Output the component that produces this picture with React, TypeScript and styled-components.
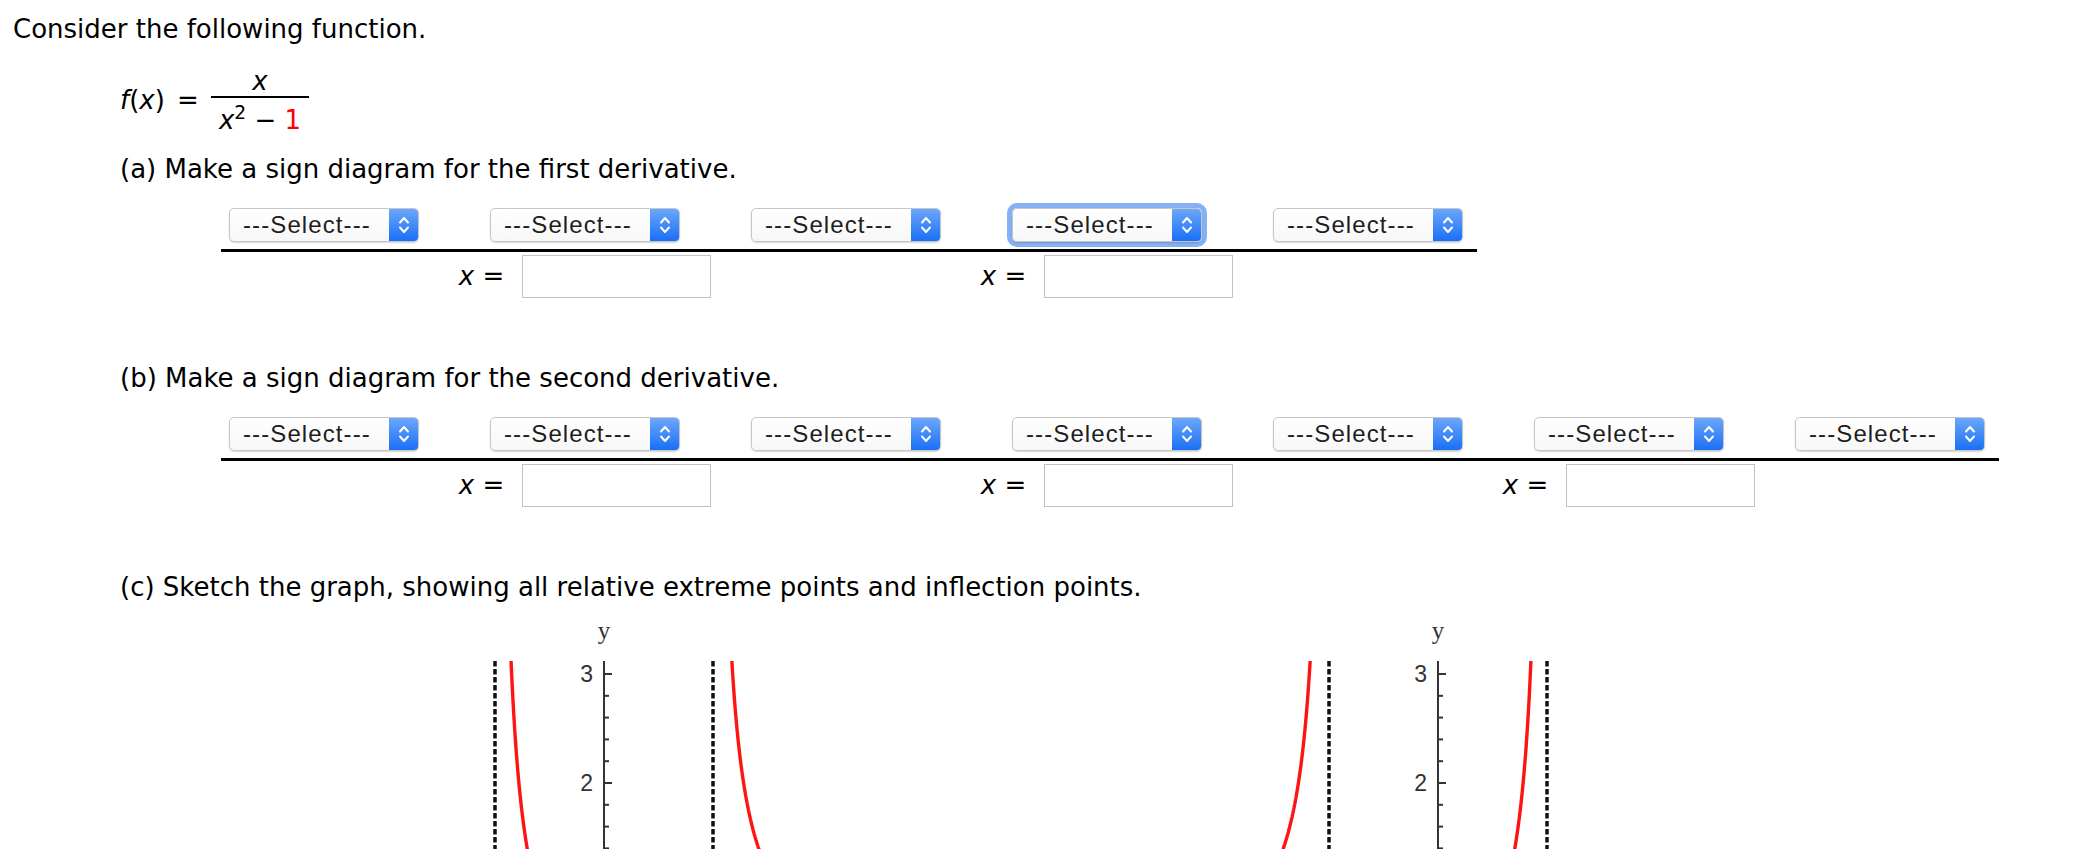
import React from 'react';
import styled, { createGlobalStyle } from 'styled-components';

const GlobalStyle = createGlobalStyle`
  html, body {
    margin: 0;
    padding: 0;
    background: #fff;
    overflow: hidden;
  }
  body {
    font-family: 'DejaVu Sans', Verdana, sans-serif;
    color: #000;
  }
`;

const Page = styled.div`
  padding: 14px 0 0 13px;
  font-size: 26px;
  line-height: 31px;
`;

const Intro = styled.p`
  margin: 0;
`;

const Formula = styled.div`
  display: flex;
  align-items: center;
  margin: 21px 0 0 107px;
`;

const Lhs = styled.span`
  white-space: pre;
  word-spacing: 4px;
`;

const Var = styled.i`
  font-style: italic;
`;

const Fraction = styled.span`
  display: inline-flex;
  flex-direction: column;
  align-items: center;
  margin-left: 12px;
`;

const Numerator = styled.span`
  line-height: 30px;
`;

const Bar = styled.span`
  align-self: stretch;
  height: 2px;
  background: #000;
`;

const Denominator = styled.span`
  padding: 7px 8px 0;
  line-height: 30px;
  white-space: pre;
`;

const Sup = styled.sup`
  font-size: 0.72em;
  vertical-align: 0.55em;
  line-height: 0;
`;

const Red = styled.span`
  color: #f00;
`;

const PartTitle = styled.p<{ $top: number }>`
  margin: ${({ $top }) => $top}px 0 0 107px;
`;

const Diagram = styled.div`
  margin: 23px 0 0 208px;
  width: max-content;
`;

const SelectRow = styled.div<{ $cols: number }>`
  display: grid;
  grid-template-columns: repeat(${({ $cols }) => $cols}, 190px);
  column-gap: 71px;
  padding: 0 14px 7px 8px;
  border-bottom: 3px solid #000;
`;

const PointRow = styled.div<{ $cols: number }>`
  display: grid;
  grid-template-columns: repeat(${({ $cols }) => $cols}, 190px);
  column-gap: 71px;
  padding: 3px 14px 0 8px;
`;

const PointCell = styled.div<{ $col: number }>`
  grid-column: ${({ $col }) => $col};
  display: flex;
  align-items: center;
  justify-content: center;
  white-space: pre;
`;

const AnswerInput = styled.input`
  width: 189px;
  height: 43px;
  box-sizing: border-box;
  margin: 0 0 0 18px;
  border: 1px solid #c2c2c2;
  background: #fff;
  flex-shrink: 0;
`;

const SelectBox = styled.div<{ $focused?: boolean }>`
  display: flex;
  width: 190px;
  height: 34px;
  box-sizing: border-box;
  border: 1px solid #c6c6c6;
  border-radius: 5px;
  background: linear-gradient(#ffffff, #f7f7f7);
  overflow: hidden;
  box-shadow: 0 1px 1.5px rgba(0, 0, 0, 0.16)
    ${({ $focused }) => ($focused ? ', 0 0 0 5px #85b0f3' : '')};
`;

const SelectLabel = styled.span`
  flex: 1;
  padding-left: 13px;
  font-family: 'Liberation Sans', Arial, sans-serif;
  font-size: 24px;
  letter-spacing: 1.1px;
  line-height: 32px;
  color: #1e1e1e;
`;

const SelectArrow = styled.span`
  width: 29px;
  display: flex;
  align-items: center;
  justify-content: center;
  background: linear-gradient(#6ca7fb, #1a6ff6);
`;

const GraphRow = styled.div`
  display: flex;
  gap: 394px;
  margin: 6.5px 0 0 371px;
`;

const Select = ({ focused }: { focused?: boolean }) => (
  <SelectBox $focused={focused}>
    <SelectLabel>---Select---</SelectLabel>
    <SelectArrow>
      <svg width="14" height="24" viewBox="0 0 14 24">
        <path
          d="M3 9.5 L7 5 L11 9.5 M3 14.5 L7 19 L11 14.5"
          fill="none"
          stroke="#fff"
          strokeWidth="2"
          strokeLinecap="round"
          strokeLinejoin="round"
        />
      </svg>
    </SelectArrow>
  </SelectBox>
);

interface SignDiagramProps {
  cols: number;
  focusedIndex?: number;
}

const SignDiagram = ({ cols, focusedIndex }: SignDiagramProps) => {
  const points = Array.from({ length: Math.floor(cols / 2) }, (_, i) => i * 2 + 2);
  return (
    <Diagram>
      <SelectRow $cols={cols}>
        {Array.from({ length: cols }, (_, i) => (
          <Select key={i} focused={i === focusedIndex} />
        ))}
      </SelectRow>
      <PointRow $cols={cols}>
        {points.map((c) => (
          <PointCell key={c} $col={c}>
            <Var>x</Var> =
            <AnswerInput type="text" />
          </PointCell>
        ))}
      </PointRow>
    </Diagram>
  );
};

// graph geometry: one unit is 109px, y = 3 sits 65px below the top
const U = 109;
const OX = 220;
const Y3 = 65;
const TOP = 52;
const W = 440;
const H = 240;
const sx = (x: number) => OX + x * U;
const sy = (v: number) => Y3 + (3 - v) * U;

const branchPath = (f: (x: number) => number, a: number, b: number) => {
  const pts: string[] = [];
  for (let x = a; x <= b; x += 0.0008) {
    const y = sy(f(x));
    if (y < TOP - 60 || y > H + 60) continue;
    pts.push(`${sx(x).toFixed(2)},${y.toFixed(2)}`);
  }
  return pts.length ? 'M' + pts.join(' L') : '';
};

const Graph = ({ id, mirror }: { id: string; mirror?: boolean }) => {
  const f = (x: number) => (mirror ? -1 : 1) * (x / (x * x - 1));
  const ticks: number[] = [];
  for (let i = 0; i <= 15; i++) ticks.push(i * 0.2);
  const branches = [
    [-3, -1.0005],
    [-0.9995, 0.9995],
    [1.0005, 3],
  ];
  return (
    <svg width={W} height={H} viewBox={`0 0 ${W} ${H}`}>
      <defs>
        <clipPath id={`clip-${id}`}>
          <rect x="0" y={TOP} width={W} height={H - TOP} />
        </clipPath>
      </defs>
      <text
        x={OX}
        y={30}
        textAnchor="middle"
        fontFamily="'Liberation Serif', serif"
        fontSize="25"
        fill="#333"
      >
        y
      </text>
      {[-1, 1].map((a) => (
        <line
          key={a}
          x1={sx(a)}
          x2={sx(a)}
          y1={TOP}
          y2={H}
          stroke="#111"
          strokeWidth="3.5"
          strokeDasharray="5.5 2.5"
        />
      ))}
      <line x1={OX} x2={OX} y1={TOP} y2={H} stroke="#333" strokeWidth="2" />
      {ticks
        .filter((v) => sy(v) <= H)
        .map((v) => {
          const major = Math.abs(v - Math.round(v)) < 1e-6;
          return (
            <line
              key={v}
              x1={OX}
              x2={OX + (major ? 8 : 5)}
              y1={sy(v)}
              y2={sy(v)}
              stroke="#333"
              strokeWidth="2"
            />
          );
        })}
      {[3, 2].map((v) => (
        <text
          key={v}
          x={OX - 11}
          y={sy(v) + 8}
          textAnchor="end"
          fontFamily="'Liberation Sans', sans-serif"
          fontSize="23"
          fill="#333"
        >
          {v}
        </text>
      ))}
      <g clipPath={`url(#clip-${id})`}>
        {branches.map(([a, b]) => (
          <path
            key={a}
            d={branchPath(f, a, b)}
            fill="none"
            stroke="#ff1414"
            strokeWidth="3.4"
          />
        ))}
      </g>
    </svg>
  );
};

const App = () => (
  <>
    <GlobalStyle />
    <Page>
      <Intro>Consider the following function.</Intro>
      <Formula>
        <Lhs>
          <Var>f</Var>(<Var>x</Var>) =
        </Lhs>
        <Fraction>
          <Numerator>
            <Var>x</Var>
          </Numerator>
          <Bar />
          <Denominator>
            <Var>x</Var>
            <Sup>2</Sup> − <Red>1</Red>
          </Denominator>
        </Fraction>
      </Formula>
      <PartTitle $top={18.5}>(a) Make a sign diagram for the first derivative.</PartTitle>
      <SignDiagram cols={5} focusedIndex={3} />
      <PartTitle $top={65.5}>(b) Make a sign diagram for the second derivative.</PartTitle>
      <SignDiagram cols={7} />
      <PartTitle $top={64.5}>
        (c) Sketch the graph, showing all relative extreme points and inflection points.
      </PartTitle>
      <GraphRow>
        <Graph id="g1" />
        <Graph id="g2" mirror />
      </GraphRow>
    </Page>
  </>
);

export default App;
